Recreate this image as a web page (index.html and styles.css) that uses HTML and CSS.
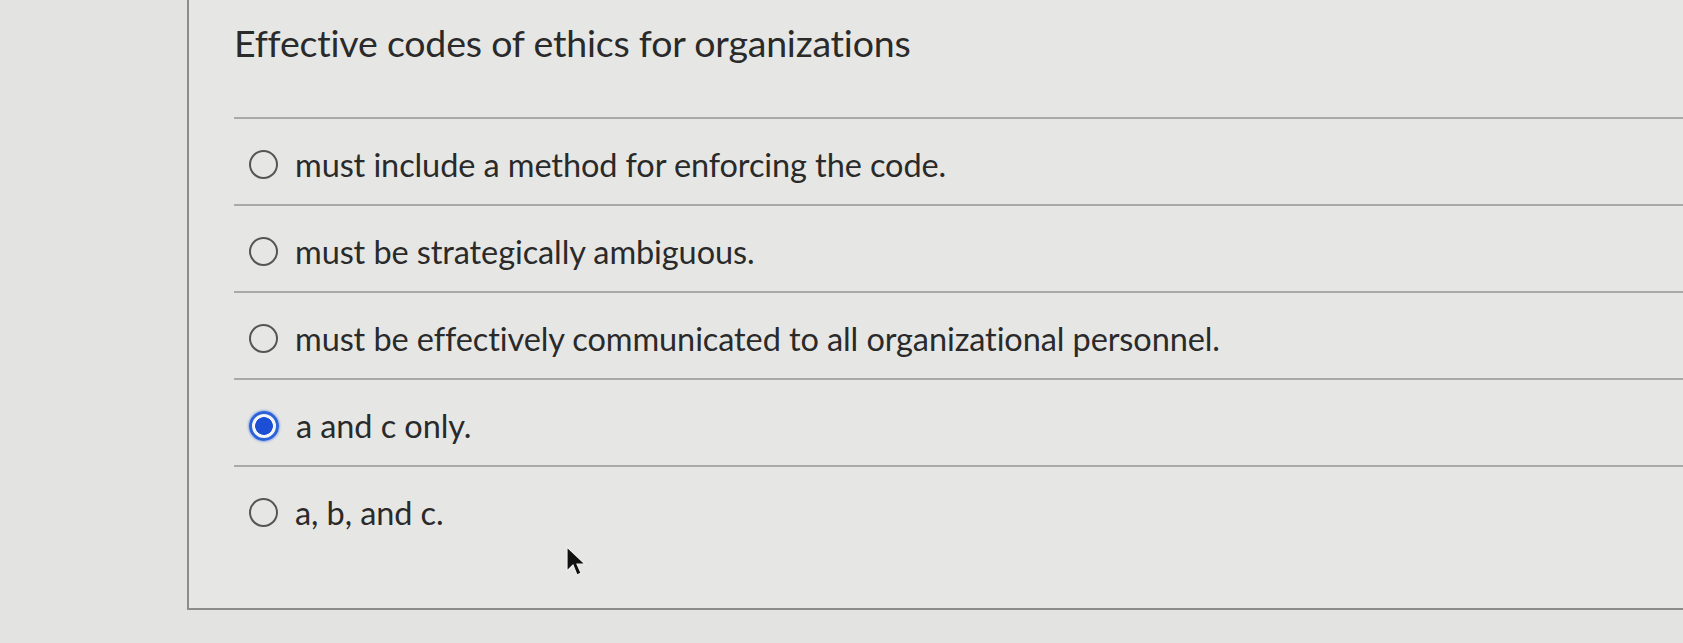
FILE: index.html
```html
<!DOCTYPE html>
<html lang="en">
<head>
<meta charset="utf-8">
<title>Question</title>
<link rel="stylesheet" href="styles.css">
</head>
<body>
<div class="page">
  <div class="panel">
    <h1 class="question">Effective codes of ethics for organizations</h1>
    <ul class="options">
      <li class="option"><span class="radio"></span><span class="label">must include a method for enforcing the code.</span></li>
      <li class="option"><span class="radio"></span><span class="label">must be strategically ambiguous.</span></li>
      <li class="option"><span class="radio"></span><span class="label">must be effectively communicated to all organizational personnel.</span></li>
      <li class="option"><span class="radio checked"></span><span class="label">a and c only.</span></li>
      <li class="option"><span class="radio"></span><span class="label">a, b, and c.</span></li>
    </ul>
  </div>
  <svg class="cursor" width="22" height="34" viewBox="0 0 22 34"><path d="M1 1 L1 25 L7 19 L11 29 L15 27 L11 18 L19 18 Z" fill="#111" stroke="#eee" stroke-width="1.2"/></svg>
</div>
</body>
</html>
```
FILE: styles.css
```css
html, body {
  margin: 0;
  padding: 0;
}
body {
  background: #e3e4e2;
  font-family: Lato, "Open Sans", sans-serif;
  color: #2a2a2a;
  width: 1683px;
  height: 643px;
  overflow: hidden;
}
.page {
  position: relative;
  height: 643px;
}
.panel {
  margin-left: 187px;
  height: 610px;
  border-left: 2px solid #8c8d8b;
  border-bottom: 2px solid #8c8d8b;
  background: #e6e7e5;
  padding-left: 45px;
  box-sizing: border-box;
}
.question {
  margin: 0;
  padding-top: 18px;
  height: 117px;
  box-sizing: border-box;
  font-weight: 400;
  font-size: 37.5px;
  line-height: 50px;
  letter-spacing: -0.2px;
}
.options {
  list-style: none;
  margin: 0;
  padding: 0;
}
.option {
  border-top: 2px solid #a9aaa8;
  height: 87px;
  box-sizing: border-box;
  display: flex;
  align-items: center;
  padding-top: 6px;
  padding-left: 15px;
}
.radio {
  width: 25px;
  height: 25px;
  border: 2.5px solid #555;
  border-radius: 50%;
  flex: none;
  box-sizing: content-box;
}
.radio.checked {
  border: 3px solid #2d63d8;
  width: 24px;
  height: 24px;
  background: radial-gradient(circle, #1c4fd6 0 8.5px, #f4f5f7 9.2px);
  box-shadow: 0 0 2px 1px rgba(60,110,230,0.45);
}
.label {
  margin-left: 17px;
  font-size: 32.5px;
  line-height: 40px;
  letter-spacing: -0.1px;
}
.cursor {
  position: absolute;
  left: 566px;
  top: 546px;
}
```
